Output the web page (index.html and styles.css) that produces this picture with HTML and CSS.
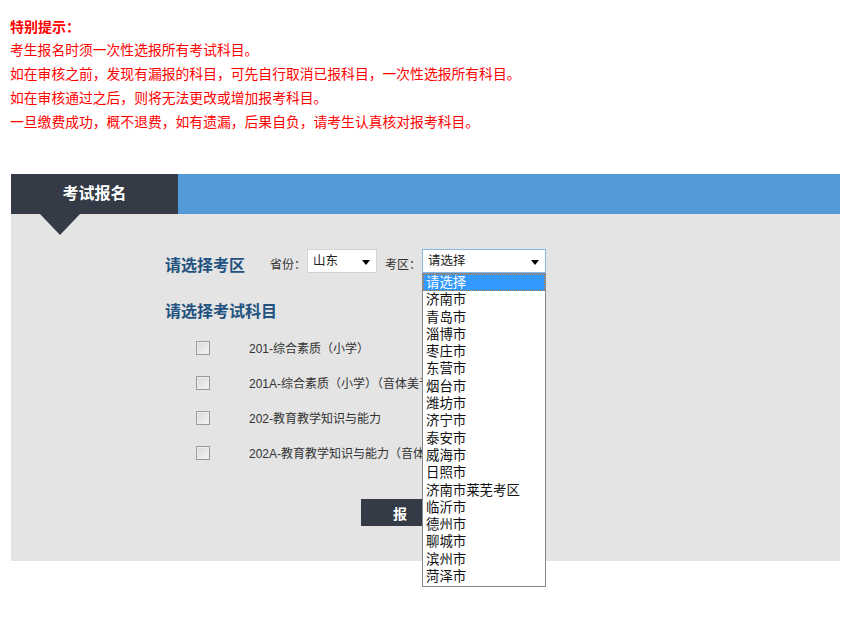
FILE: index.html
```
<!DOCTYPE html>
<html lang="zh-CN">
<head>
    <meta charset="UTF-8">
    <meta name="viewport" content="width=device-width, initial-scale=1.0">
    <title>考试报名</title>
    <link rel="stylesheet" href="styles.css">
</head>
<body>
    <div class="notice">
        <h4>特别提示：</h4>
        <p>考生报名时须一次性选报所有考试科目。</p>
        <p>如在审核之前，发现有漏报的科目，可先自行取消已报科目，一次性选报所有科目。</p>
        <p>如在审核通过之后，则将无法更改或增加报考科目。</p>
        <p>一旦缴费成功，概不退费，如有遗漏，后果自负，请考生认真核对报考科目。</p>
    </div>

    <div class="panel">
        <div class="panel-head">
            <div class="tab">考试报名</div>
        </div>
        <div class="panel-body">
            <div class="row">
                <span class="label">请选择考区</span>
                <span class="small">省份：</span>
                <div class="select prov">山东<i class="arrow"></i></div>
                <span class="small">考区：</span>
                <div class="select-wrap">
                    <div class="select area">请选择<i class="arrow"></i></div>
                    <!-- 펼쳐진 드롭다운 목록 -->
                    <ul class="options">
                        <li class="on">请选择</li>
                        <li>济南市</li>
                        <li>青岛市</li>
                        <li>淄博市</li>
                        <li>枣庄市</li>
                        <li>东营市</li>
                        <li>烟台市</li>
                        <li>潍坊市</li>
                        <li>济宁市</li>
                        <li>泰安市</li>
                        <li>威海市</li>
                        <li>日照市</li>
                        <li>济南市莱芜考区</li>
                        <li>临沂市</li>
                        <li>德州市</li>
                        <li>聊城市</li>
                        <li>滨州市</li>
                        <li>菏泽市</li>
                    </ul>
                </div>
            </div>

            <div class="label subjects-title">请选择考试科目</div>
            <ul class="subjects">
                <li><input type="checkbox"><span>201-综合素质（小学）</span></li>
                <li><input type="checkbox"><span>201A-综合素质（小学）（音体美专业）</span></li>
                <li><input type="checkbox"><span>202-教育教学知识与能力</span></li>
                <li><input type="checkbox"><span>202A-教育教学知识与能力（音体美专业）</span></li>
            </ul>

            <button class="btn">报 名</button>
        </div>
    </div>
</body>
</html>
```

FILE: styles.css
```
* { margin: 0; padding: 0; box-sizing: border-box; }

html, body { overflow: visible; }

body {
    min-height: 610px;
    font-family: "Liberation Sans", "Noto Sans CJK SC", sans-serif;
    background: #fff;
    color: #333;
}

ul { list-style: none; }

.notice {
    padding: 15px 10px 0;
    color: #ff0000;
    font-size: 14px;
    line-height: 24px;
}

.notice h4 { font-size: 14px; font-weight: bold; }

.notice p { font-size: 13.8px; }

.panel {
    width: 829px;
    margin: 39px 0 0 11px;
}

.panel-head {
    height: 40px;
    background-color: #529bd7;
}

.tab {
    position: relative;
    width: 167px;
    height: 40px;
    line-height: 40px;
    background-color: #343a46;
    color: #fff;
    font-size: 16px;
    font-weight: bold;
    text-align: center;
}

/* 탭 아래 삼각형 */
.tab::after {
    content: "";
    position: absolute;
    left: 29px;
    top: 40px;
    border-left: 20px solid transparent;
    border-right: 20px solid transparent;
    border-top: 21px solid #343a46;
}

.panel-body {
    background-color: #e4e4e4;
    padding: 35px 0 35px 154px;
}

.row {
    display: flex;
    align-items: center;
    height: 24px;
}

.label {
    color: #22527f;
    font-size: 16px;
    font-weight: bold;
}

.row .label { margin-right: 25px; margin-top: 6px; }

.small {
    font-size: 12px;
    color: #333;
    margin-top: 4px;
}

.select {
    position: relative;
    height: 24px;
    line-height: 22px;
    background: #fff;
    border: 1px solid #d2d2d2;
    font-size: 12.5px;
    color: #222;
    padding-left: 5px;
}

.prov { width: 70px; margin: 0 8px 0 1px; }

.select-wrap {
    position: relative;
    margin-left: 1px;
    z-index: 5;
}

.area {
    width: 124px;
    border-color: #8ab8e6;
}

.arrow {
    position: absolute;
    right: 6px;
    top: 10px;
    border-left: 4px solid transparent;
    border-right: 4px solid transparent;
    border-top: 5px solid #000;
}

.options {
    position: absolute;
    left: 0;
    top: 24px;
    width: 124px;
    background: #fff;
    border: 1px solid #828790;
    padding: 0 0 1px;
}

.options li {
    height: 17.3px;
    line-height: 17.3px;
    font-size: 13.4px;
    color: #111;
    padding-left: 3px;
    white-space: nowrap;
}

.options li.on {
    background-color: #3399ff;
    color: #fff;
    outline: 1px dotted #c08040;
    outline-offset: -1px;
}

.subjects-title {
    margin-top: 27px;
    line-height: 24px;
}

.subjects {
    margin-top: 6px;
    padding-left: 31px;
}

.subjects li {
    display: flex;
    align-items: center;
    height: 35px;
    font-size: 12px;
    color: #333;
}

.subjects input {
    appearance: none;
    width: 14px;
    height: 14px;
    border: 1px solid #9a9a9a;
    background: linear-gradient(135deg, #d8d8d8 0%, #f4f4f4 100%);
    box-shadow: inset 0 0 0 1px #eee;
    margin-right: 39px;
}

.btn {
    appearance: none;
    border: 0;
    display: block;
    width: 120px;
    height: 27px;
    margin: 29px 0 0 196px;
    background-color: #343a46;
    color: #fff;
    font-size: 14px;
    font-weight: bold;
    font-family: "Liberation Sans", "Noto Sans CJK SC", sans-serif;
    letter-spacing: 8px;
}
```
